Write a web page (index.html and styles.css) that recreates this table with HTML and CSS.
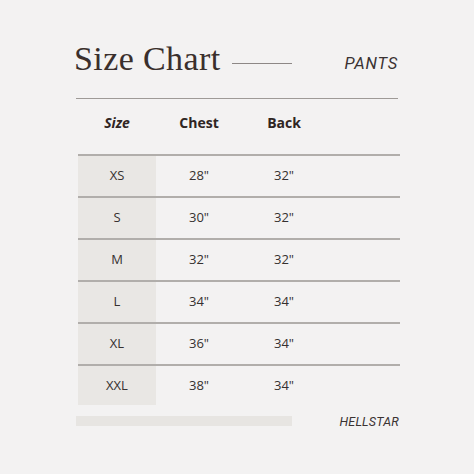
FILE: index.html
```html
<!DOCTYPE html>
<html lang="en">
<head>
<meta charset="utf-8">
<title>Size Chart</title>
<link rel="stylesheet" href="styles.css">
</head>
<body>
<div class="page">
  <header class="title-row">
    <h1 class="title">Size Chart</h1>
    <span class="dash"></span>
    <span class="category">PANTS</span>
  </header>
  <div class="rule"></div>
  <div class="table">
    <div class="thead">
      <div class="th th-size">Size</div>
      <div class="th">Chest</div>
      <div class="th">Back</div>
      <div class="th"></div>
    </div>
    <div class="row"><div class="cell size">XS</div><div class="cell">28"</div><div class="cell">32"</div><div class="cell"></div></div>
    <div class="row"><div class="cell size">S</div><div class="cell">30"</div><div class="cell">32"</div><div class="cell"></div></div>
    <div class="row"><div class="cell size">M</div><div class="cell">32"</div><div class="cell">32"</div><div class="cell"></div></div>
    <div class="row"><div class="cell size">L</div><div class="cell">34"</div><div class="cell">34"</div><div class="cell"></div></div>
    <div class="row"><div class="cell size">XL</div><div class="cell">36"</div><div class="cell">34"</div><div class="cell"></div></div>
    <div class="row last"><div class="cell size">XXL</div><div class="cell">38"</div><div class="cell">34"</div><div class="cell"></div></div>
  </div>
  <footer class="footer">
    <div class="bar"></div>
    <span class="brand">HELLSTAR</span>
  </footer>
</div>
</body>
</html>
```

FILE: styles.css
```css
* { box-sizing: border-box; }
html, body { margin: 0; padding: 0; }
body {
  background: #f3f2f2;
  width: 474px;
  height: 474px;
  overflow: hidden;
  color: #333;
  font-family: "Open Sans", "Liberation Sans", sans-serif;
}
.page {
  padding: 39px 0 0 76px;
  width: 398px;
}
.title-row {
  display: flex;
  align-items: center;
  height: 40px;
}
.title {
  margin: 0 0 0 -2px;
  font-family: "Liberation Serif", "DejaVu Serif", serif;
  font-weight: 400;
  font-size: 34px;
  line-height: 40px;
  letter-spacing: 0.4px;
  color: #3a2f2c;
}
.dash {
  width: 60px;
  height: 1px;
  background: #8d8886;
  margin-left: 11px;
  margin-top: 8px;
}
.category {
  margin-left: auto;
  font-family: Roboto, "Liberation Sans", sans-serif;
  font-style: italic;
  font-size: 16.5px;
  letter-spacing: 0.8px;
  color: #3a3332;
  margin-top: 8px;
}
.rule {
  margin-top: 19px;
  height: 1px;
  background: #9e9a97;
}
.table {
  margin-left: 2px;
  width: 322px;
}
.thead, .row {
  display: grid;
  grid-template-columns: 78px 86px 84px 1fr;
}
.thead {
  height: 46px;
  margin-bottom: 9px;
}
.th {
  text-align: center;
  font-weight: 700;
  font-size: 14px;
  line-height: 47px;
  color: #2f2523;
}
.th-size { font-style: italic; }
.row {
  height: 42px;
  border-top: 2px solid #b1aeab;
}
.row.last { height: 36px; }
.cell {
  text-align: center;
  font-size: 13px;
  line-height: 39px;
  color: #363130;
}
.cell.size { background: #e9e7e4; }
.footer {
  display: flex;
  align-items: center;
  margin-top: 16px;
  height: 10px;
}
.bar {
  width: 216px;
  height: 10px;
  background: #e7e5e2;
}
.brand {
  margin-left: auto;
  margin-right: -1px;
  font-family: Roboto, "Liberation Sans", sans-serif;
  font-style: italic;
  font-size: 12.5px;
  letter-spacing: 0.2px;
  color: #3a3332;
}
```
